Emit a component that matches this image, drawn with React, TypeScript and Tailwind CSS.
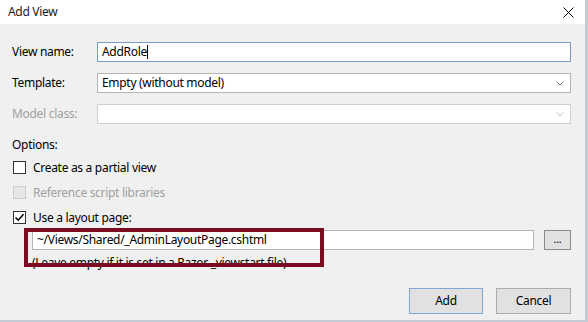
import React from "react";

const Chevron = ({ color }: { color: string }) => (
  <svg width="8" height="5" viewBox="0 0 8 5" className="shrink-0">
    <path d="M0.5 0.5 L4 4 L7.5 0.5" fill="none" stroke={color} strokeWidth="1" />
  </svg>
);

const Checkbox = ({ checked, disabled }: { checked?: boolean; disabled?: boolean }) => (
  <span
    className={`w-[13px] h-[13px] shrink-0 border flex items-center justify-center ${
      disabled ? "border-[#cccccc] bg-[#e6e6e6]" : "border-[#333333] bg-white"
    }`}
  >
    {checked && (
      <svg width="11" height="11" viewBox="0 0 11 11">
        <path d="M1.5 5.5 L4.2 8.2 L9.5 2.2" fill="none" stroke="#000" strokeWidth="1.6" />
      </svg>
    )}
  </span>
);

export default function App() {
  return (
    <div className="relative w-[588px] h-[322px] bg-[#f0f0f0] border-r-[3px] border-b-[2px] border-[#c3cbd5] font-['Noto_Sans',sans-serif] text-[12px] leading-[16px] tracking-[-0.3px] text-black overflow-hidden">
      {/* Title bar */}
      <div className="h-[24px] bg-white flex items-center justify-between pl-[8px] pr-[11px]">
        <span className="text-[12px] text-[#1a1a1a]">Add View</span>
        <svg width="11" height="11" viewBox="0 0 11 11">
          <path d="M0.5 0.5 L10.5 10.5 M10.5 0.5 L0.5 10.5" stroke="#000" strokeWidth="1" />
        </svg>
      </div>

      <div className="pt-[18px] pl-[12px] pr-[14px]">
        {/* Fields */}
        <div className="grid grid-cols-[85px_1fr] gap-y-[11px] items-center">
          <span>View name:</span>
          <div className="h-[20px] bg-white border border-[#7a9dc6] flex items-center pl-[4px]">
            <span>AddRole</span>
            <span className="w-px h-[14px] bg-black" />
          </div>

          <span>Template:</span>
          <div className="h-[20px] bg-white border border-[#b4b4b4] flex items-center justify-between pl-[4px] pr-[6px]">
            <span>Empty (without model)</span>
            <Chevron color="#707070" />
          </div>

          <span className="text-[#a0a0a0]">Model class:</span>
          <div className="h-[20px] bg-white border border-[#cfcfcf] flex items-center justify-end pr-[6px]">
            <Chevron color="#c0c0c0" />
          </div>
        </div>

        {/* Options */}
        <div className="mt-[13px] h-[16px]">Options:</div>
        <div className="mt-[2px] flex flex-col">
          <div className="h-[25px] flex items-center gap-[7px] pl-[1px]">
            <Checkbox />
            <span>Create as a partial view</span>
          </div>
          <div className="h-[25px] flex items-center gap-[7px] pl-[1px]">
            <Checkbox disabled />
            <span className="text-[#a0a0a0]">Reference script libraries</span>
          </div>
          <div className="h-[25px] flex items-center gap-[7px] pl-[1px]">
            <Checkbox checked />
            <span>Use a layout page:</span>
          </div>
        </div>

        {/* Layout path */}
        <div className="pl-[20px] flex items-center">
          <div className="flex-1 h-[20px] bg-white border border-[#b4b4b4] flex items-center pl-[4px]">
            ~/Views/Shared/_AdminLayoutPage.cshtml
          </div>
          <button className="ml-[10px] w-[27px] h-[20px] bg-[#e1e1e1] border border-[#8a8a8a] text-[11px] leading-[12px] flex items-center justify-center pb-[2px]">
            ...
          </button>
        </div>
        <div className="pl-[20px] mt-[5px] h-[16px]">
          (Leave empty if it is set in a Razor _viewstart file)
        </div>

        {/* Buttons */}
        <div className="mt-[17px] flex justify-end gap-[13px]">
          <button className="w-[74px] h-[26px] bg-[#e1e1e1] border border-[#7fa8d6]">Add</button>
          <button className="w-[75px] h-[26px] bg-[#e1e1e1] border border-[#adadad]">Cancel</button>
        </div>
      </div>

      {/* Highlight annotation */}
      <div className="absolute left-[24px] top-[228px] w-[300px] h-[39px] border-4 border-[#7a0b20]" />
    </div>
  );
}
